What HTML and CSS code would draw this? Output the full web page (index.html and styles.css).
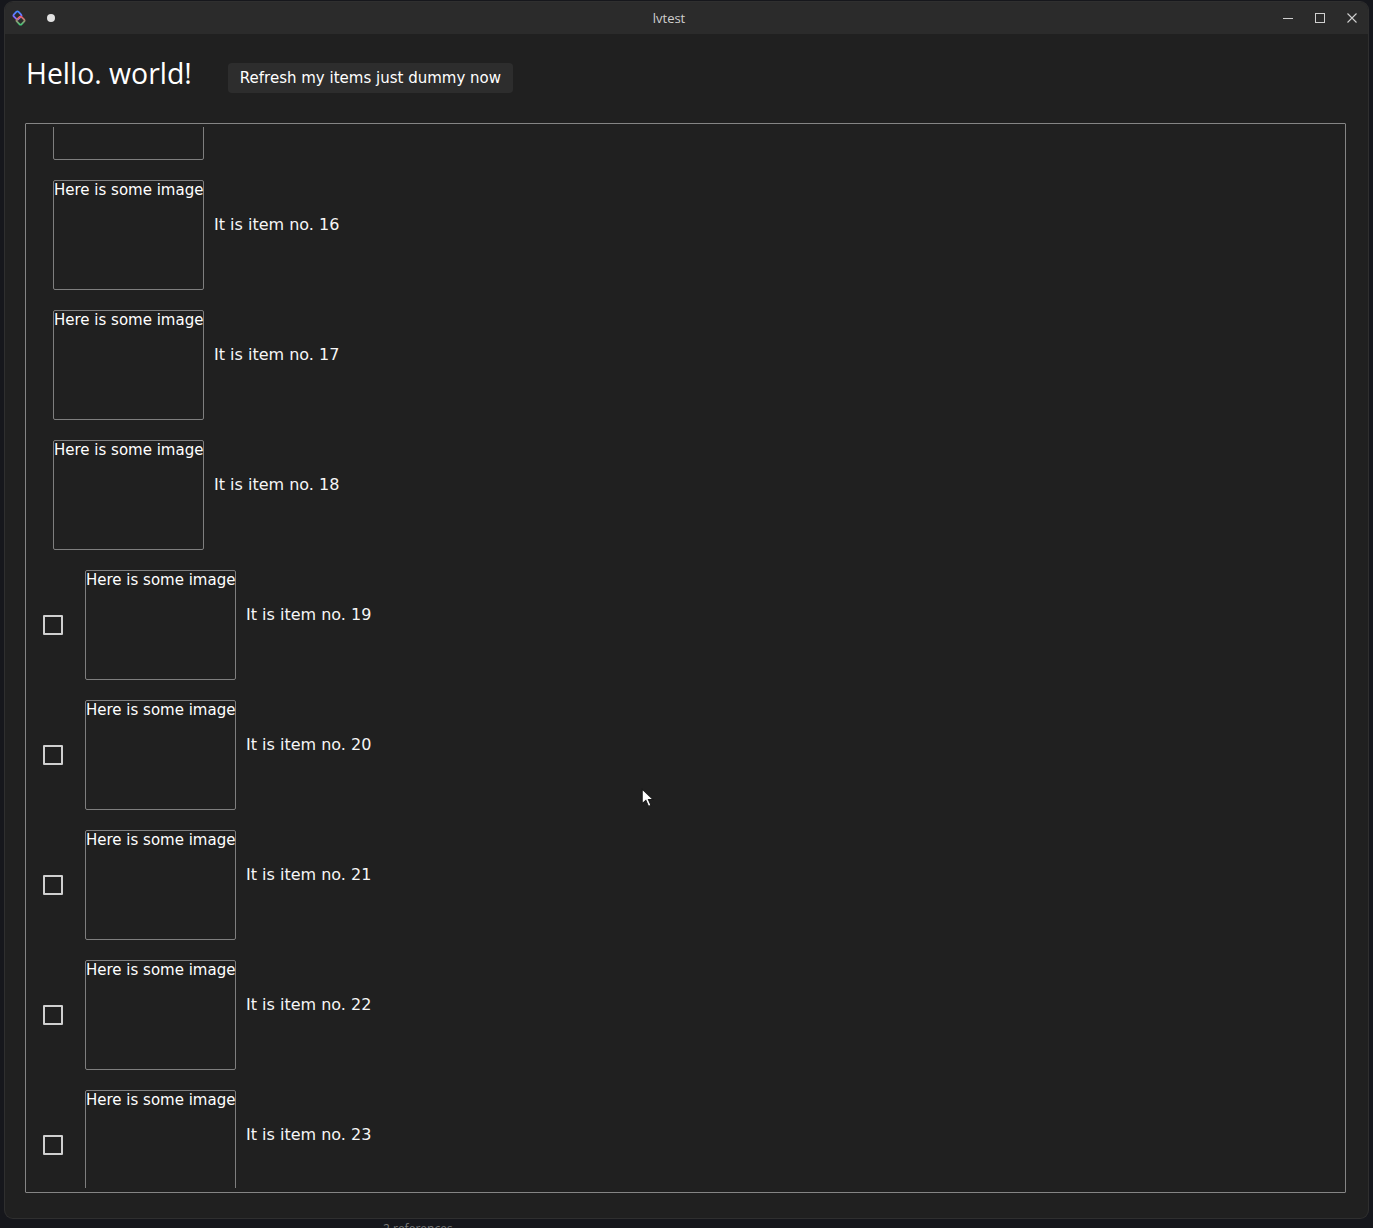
FILE: index.html
```html
<!DOCTYPE html>
<html lang="en">
<head>
<meta charset="utf-8">
<title>lvtest</title>
<link rel="stylesheet" href="styles.css">
</head>
<body>
<div class="window">
  <div class="titlebar">
    <div class="tb-left">
      <svg class="app-icon" viewBox="0 0 16 16" width="16" height="16">
        <defs>
          <linearGradient id="g1" x1="0" y1="0" x2="1" y2="1">
            <stop offset="0" stop-color="#3d8bff"/>
            <stop offset="1" stop-color="#a05cff"/>
          </linearGradient>
          <linearGradient id="g2" x1="0" y1="0" x2="1" y2="1">
            <stop offset="0" stop-color="#ff4f6a"/>
            <stop offset="1" stop-color="#3ccf7a"/>
          </linearGradient>
        </defs>
        <rect x="3.2" y="2.2" width="6.5" height="6.5" rx="1.6" transform="rotate(45 6.45 5.45)" fill="none" stroke="url(#g1)" stroke-width="1.8"/>
        <rect x="6.3" y="7.3" width="6.5" height="6.5" rx="1.6" transform="rotate(45 9.55 10.55)" fill="none" stroke="url(#g2)" stroke-width="1.8"/>
      </svg>
      <span class="dot"></span>
    </div>
    <div class="tb-title">lvtest</div>
    <div class="tb-controls">
      <span class="ctl"><svg viewBox="0 0 12 12" width="12" height="12"><path d="M1 6.5h10" stroke="#cfcfcf" stroke-width="1"/></svg></span>
      <span class="ctl"><svg viewBox="0 0 12 12" width="12" height="12"><rect x="1.5" y="1.5" width="9" height="9" fill="none" stroke="#cfcfcf" stroke-width="1"/></svg></span>
      <span class="ctl"><svg viewBox="0 0 12 12" width="12" height="12"><path d="M1.5 1.5l9 9M10.5 1.5l-9 9" stroke="#cfcfcf" stroke-width="1.1"/></svg></span>
    </div>
  </div>

  <div class="content">
    <div class="header">
      <h1 class="hello">Hello. world!</h1>
      <button class="refresh">Refresh my items just dummy now</button>
    </div>

    <div class="list">
      <div class="viewport">
        <div class="items">
          <div class="row"><div class="imgbox">Here is some image</div><div class="label">It is item no. 15</div></div>
          <div class="row"><div class="imgbox">Here is some image</div><div class="label">It is item no. 16</div></div>
          <div class="row"><div class="imgbox">Here is some image</div><div class="label">It is item no. 17</div></div>
          <div class="row"><div class="imgbox">Here is some image</div><div class="label">It is item no. 18</div></div>
          <div class="row check"><span class="checkbox"></span><div class="imgbox">Here is some image</div><div class="label">It is item no. 19</div></div>
          <div class="row check"><span class="checkbox"></span><div class="imgbox">Here is some image</div><div class="label">It is item no. 20</div></div>
          <div class="row check"><span class="checkbox"></span><div class="imgbox">Here is some image</div><div class="label">It is item no. 21</div></div>
          <div class="row check"><span class="checkbox"></span><div class="imgbox">Here is some image</div><div class="label">It is item no. 22</div></div>
          <div class="row check"><span class="checkbox"></span><div class="imgbox">Here is some image</div><div class="label">It is item no. 23</div></div>
        </div>
      </div>
    </div>
  </div>

  <svg class="cursor" viewBox="0 0 14 20" width="15" height="21">
    <path d="M1 1 L1 15 L4.5 11.8 L7 17.5 L9.3 16.5 L6.9 11 L11.5 11 Z" fill="#ffffff" stroke="#1a1a1a" stroke-width="1"/>
  </svg>
</div>
<div class="below">2 references</div>
</body>
</html>
```

FILE: styles.css
```css
html, body {
  margin: 0;
  padding: 0;
  height: 100%;
}

body {
  background: #16171c;
  overflow: hidden;
  font-family: "DejaVu Sans", sans-serif;
  color: #f2f2f2;
}

.window {
  position: relative;
  margin: 2px 5px 0 5px;
  height: 1216px;
  background: #202020;
  border-radius: 8px;
  box-shadow: 0 0 0 1px #2f2f2f;
  display: flex;
  flex-direction: column;
  overflow: hidden;
}

/* ---------- title bar ---------- */
.titlebar {
  height: 32px;
  flex: none;
  background: #2b2b2b;
  display: flex;
  align-items: center;
}

.tb-left {
  width: 61px;
  box-sizing: border-box;
  padding-left: 6px;
  display: flex;
  align-items: center;
}

.app-icon {
  display: block;
}

.dot {
  width: 8px;
  height: 8px;
  border-radius: 50%;
  background: #e2e2e2;
  margin-left: 20px;
}

.tb-title {
  flex: 1;
  text-align: center;
  font-family: "Open Sans", "Noto Sans", sans-serif;
  font-size: 13px;
  color: #cfcfcf;
}

.tb-controls {
  display: flex;
}

.ctl {
  width: 32px;
  height: 32px;
  display: flex;
  align-items: center;
  justify-content: center;
}

/* ---------- content ---------- */
.content {
  flex: 1;
  padding: 0 22px 0 20px;
  display: flex;
  flex-direction: column;
}

.header {
  padding: 19px 0 0 1px;
  display: flex;
  align-items: flex-end;
}

.hello {
  margin: 0;
  font-family: "Open Sans", sans-serif;
  font-weight: 400;
  font-size: 28.4px;
  line-height: 41px;
  color: #ffffff;
  white-space: nowrap;
}

.refresh {
  margin: 0 0 1px 36px;
  height: 30px;
  padding: 0 12px;
  background: #2d2d2d;
  border: 0;
  border-radius: 4px;
  color: #ffffff;
  font-family: "DejaVu Sans", sans-serif;
  font-size: 15px;
  line-height: 30px;
  white-space: nowrap;
}

.list {
  margin-top: 29px;
  height: 1070px;
  box-sizing: border-box;
  border: 1px solid #858585;
  border-radius: 1px;
  padding: 3px 3px 4px 3px;
  display: flex;
  flex-direction: column;
}

.viewport {
  flex: 1;
  overflow: hidden;
}

.items {
  margin-top: -77px;
}

.row {
  display: flex;
  align-items: center;
  height: 110px;
  margin-bottom: 20px;
  padding-left: 24px;
}

.row.check {
  padding-left: 14px;
}

.checkbox {
  width: 20px;
  height: 20px;
  box-sizing: border-box;
  border: 2px solid #cfcfcf;
  border-radius: 1px;
  margin-right: 22px;
  flex: none;
}

.imgbox {
  width: 151px;
  height: 110px;
  box-sizing: border-box;
  border: 1px solid #7e7e7e;
  border-radius: 2px;
  font-size: 15px;
  color: #ffffff;
  white-space: nowrap;
  flex: none;
}

.label {
  margin-left: 10px;
  margin-bottom: 22px;
  font-size: 16px;
  color: #f6f6f6;
}

.cursor {
  position: absolute;
  left: 636px;
  top: 786px;
}

.below {
  padding-left: 383px;
  margin-top: 2px;
  font-family: "Open Sans", sans-serif;
  font-size: 12px;
  color: #7a7a7a;
}
```
